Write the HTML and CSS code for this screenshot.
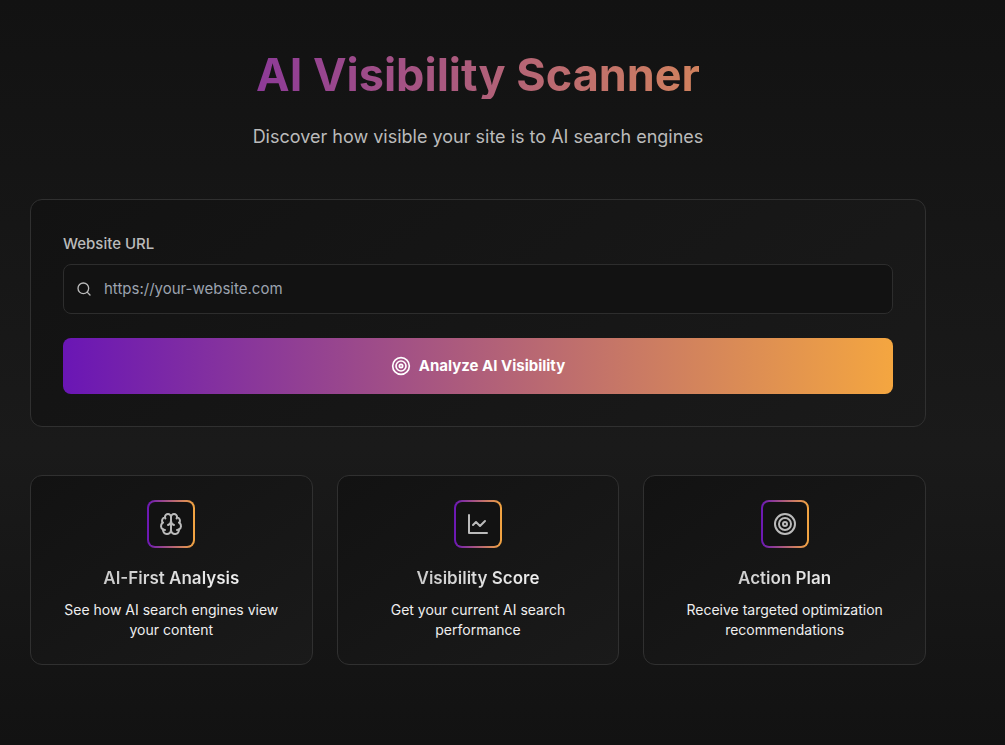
FILE: index.html
```html
<!DOCTYPE html>
<html lang="en">
<head>
    <meta charset="UTF-8">
    <meta name="viewport" content="width=device-width, initial-scale=1.0">
    <title>AI Visibility Scanner</title>

    <link rel="stylesheet" href="styles.css">

</head>
<body>

    <main class="container">

        <header class="hero">
            <h1>AI Visibility Scanner</h1>
            <p>Discover how visible your site is to AI search engines</p>
        </header>

        <form class="card scan-form">
            <label for="url">Website URL</label>
            <div class="url-field">
                <svg class="icon search-icon" viewBox="0 0 24 24" aria-hidden="true">
                    <circle cx="11" cy="11" r="8"/>
                    <path d="m21 21-4.3-4.3"/>
                </svg>
                <input type="url" id="url" placeholder="https://your-website.com">
            </div>
            <button type="submit">
                <svg class="icon button-icon" viewBox="0 0 24 24" aria-hidden="true">
                    <circle cx="12" cy="12" r="10"/>
                    <circle cx="12" cy="12" r="6"/>
                    <circle cx="12" cy="12" r="2"/>
                </svg>
                Analyze AI Visibility
            </button>
        </form>

        <section class="features">

            <article class="card feature">
                <div class="icon-box">
                    <svg class="icon" viewBox="0 0 24 24" aria-hidden="true">
                        <path d="M12 5a3 3 0 1 0-5.997.125 4 4 0 0 0-2.526 5.77 4 4 0 0 0 .556 6.588A4 4 0 1 0 12 18Z"/>
                        <path d="M12 5a3 3 0 1 1 5.997.125 4 4 0 0 1 2.526 5.77 4 4 0 0 1-.556 6.588A4 4 0 1 1 12 18Z"/>
                        <path d="M15 13a4.5 4.5 0 0 1-3-4 4.5 4.5 0 0 1-3 4"/>
                        <path d="M17.599 6.5a3 3 0 0 0 .399-1.375"/>
                        <path d="M6.003 5.125A3 3 0 0 0 6.401 6.5"/>
                        <path d="M3.477 10.896a4 4 0 0 1 .585-.396"/>
                        <path d="M19.938 10.5a4 4 0 0 1 .585.396"/>
                        <path d="M6 18a4 4 0 0 1-1.967-.516"/>
                        <path d="M19.967 17.484A4 4 0 0 1 18 18"/>
                    </svg>
                </div>
                <h2>AI-First Analysis</h2>
                <p>See how AI search engines view your content</p>
            </article>

            <article class="card feature">
                <div class="icon-box">
                    <svg class="icon" viewBox="0 0 24 24" aria-hidden="true">
                        <path d="M3 3v18h18"/>
                        <path d="m19 9-5 5-4-4-3 3"/>
                    </svg>
                </div>
                <h2>Visibility Score</h2>
                <p>Get your current AI search performance</p>
            </article>

            <article class="card feature">
                <div class="icon-box">
                    <svg class="icon" viewBox="0 0 24 24" aria-hidden="true">
                        <circle cx="12" cy="12" r="10"/>
                        <circle cx="12" cy="12" r="6"/>
                        <circle cx="12" cy="12" r="2"/>
                    </svg>
                </div>
                <h2>Action Plan</h2>
                <p>Receive targeted optimization recommendations</p>
            </article>

        </section>

    </main>

</body>
</html>
```

FILE: styles.css
```css
* {
    box-sizing: border-box;
}

body {
    margin: 0;
    min-height: 100vh;
    background: linear-gradient(180deg, #121212 0%, #1a1a1a 60%, #121212 100%);
    font-family: Inter, "Liberation Sans", sans-serif;
    font-size: 15px;
    line-height: 24px;
    color: #eee;
}

h1, h2, p {
    margin: 0;
}

.container {
    max-width: 986px;
    padding: 51px 60px 48px 30px;
}

.hero {
    text-align: center;
    margin-bottom: 48px;
}

.hero h1 {
    font-size: 45px;
    line-height: 48px;
    font-weight: 700;
    margin-bottom: 24px;
    background: linear-gradient(90deg, #6a16b5, #f4a640);
    -webkit-background-clip: text;
    background-clip: text;
    color: transparent;
}

.hero p {
    font-size: 18px;
    line-height: 28px;
    color: #bbb;
}

.card {
    border: 1px solid #303030;
    border-radius: 12px;
    background: linear-gradient(145deg, #121212, #1a1a1a);
}

.scan-form {
    display: flex;
    flex-direction: column;
    padding: 32px;
    margin-bottom: 48px;
}

.scan-form label {
    font-weight: 500;
    color: #bbb;
    margin-bottom: 8px;
}

.url-field {
    display: flex;
    align-items: center;
    gap: 12px;
    height: 50px;
    padding: 0 12px;
    margin-bottom: 24px;
    border: 1px solid #2d2d2d;
    border-radius: 8px;
    background: #121212;
}

.url-field input {
    flex: 1;
    min-width: 0;
    padding: 0;
    border: 0;
    outline: 0;
    background: none;
    font: inherit;
    color: #eee;
}

.url-field input::placeholder {
    color: #9ca3af;
}

.scan-form button {
    display: flex;
    align-items: center;
    justify-content: center;
    gap: 8px;
    height: 56px;
    border: 0;
    border-radius: 8px;
    background: linear-gradient(90deg, #6a16b5, #f4a640);
    font: inherit;
    font-weight: 700;
    color: #fff;
    cursor: pointer;
}

/* icons */
.icon {
    width: 24px;
    height: 24px;
    fill: none;
    stroke: #bbb;
    stroke-width: 2;
    stroke-linecap: round;
    stroke-linejoin: round;
}

.search-icon {
    width: 16px;
    height: 16px;
}

.button-icon {
    width: 20px;
    height: 20px;
    stroke: #fff;
}

/* feature cards */
.features {
    display: grid;
    grid-template-columns: repeat(3, 1fr);
    gap: 24px;
}

.feature {
    padding: 24px;
    text-align: center;
}

.icon-box {
    display: flex;
    align-items: center;
    justify-content: center;
    width: 48px;
    height: 48px;
    margin: 0 auto 16px;
    border: 2px solid transparent;
    border-radius: 8px;
    background: linear-gradient(#121212, #121212) padding-box,
                linear-gradient(90deg, #6a16b5, #f4a640) border-box;
}

.feature h2 {
    font-size: 17px;
    line-height: 28px;
    font-weight: 600;
    margin-bottom: 8px;
    background: linear-gradient(90deg, #bbb, #fff);
    -webkit-background-clip: text;
    background-clip: text;
    color: transparent;
}

.feature p {
    font-size: 14px;
    line-height: 20px;
}

@media (max-width: 640px) {
    .container {
        padding: 48px 24px;
    }

    .features {
        grid-template-columns: 1fr;
    }
}
```
